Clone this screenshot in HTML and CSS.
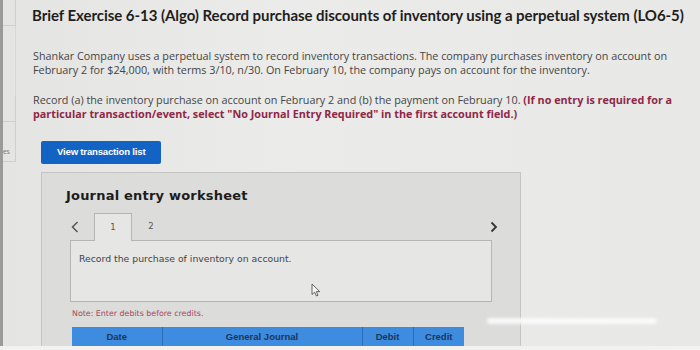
FILE: index.html
```html
<!DOCTYPE html>
<html>
<head>
<meta charset="utf-8">
<link rel="stylesheet" href="styles.css">
</head>
<body>
<div class="frame">
  <aside class="side">
    <div class="side-box sb1"></div>
    <div class="side-gap"></div>
    <div class="side-box sb2"></div>
    <div class="side-box sb3"><span>es</span></div>
  </aside>
  <main class="main">
    <h1 class="title">Brief Exercise 6-13 (Algo) Record purchase discounts of inventory using a perpetual system (LO6-5)</h1>
    <p class="para p1">Shankar Company uses a perpetual system to record inventory transactions. The company purchases inventory on account on<br>February 2 for $24,000, with terms 3/10, n/30. On February 10, the company pays on account for the inventory.</p>
    <p class="para p2">Record (a) the inventory purchase on account on February 2 and (b) the payment on February 10. <strong class="req">(If no entry is required for a<br>particular transaction/event, select "No Journal Entry Required" in the first account field.)</strong></p>
    <button class="btn">View transaction list</button>
    <section class="ws">
      <h2 class="ws-title">Journal entry worksheet</h2>
      <div class="tabs">
        <svg class="nav prev" width="8" height="12" viewBox="0 0 8 12"><path d="M6.5 1 L1.5 6 L6.5 11" fill="none" stroke="#555" stroke-width="1.5"/></svg>
        <div class="tab active">1</div>
        <div class="tab">2</div>
        <div class="spacer"></div>
        <svg class="nav next" width="8" height="12" viewBox="0 0 8 12"><path d="M1.5 1.5 L6 6 L1.5 10.5" fill="none" stroke="#333" stroke-width="1.8"/></svg>
      </div>
      <div class="content">
        <p class="content-text">Record the purchase of inventory on account.</p>
        <svg class="cursor" width="10" height="14" viewBox="0 0 10 14"><path d="M1 1 L1 11.5 L3.6 9.2 L5.4 13 L7 12.3 L5.3 8.6 L8.8 8.6 Z" fill="#f4f4f4" stroke="#555" stroke-width="0.9" stroke-linejoin="round"/></svg>
      </div>
      <p class="note">Note: Enter debits before credits.</p>
      <table class="jt">
        <thead>
          <tr>
            <th class="c-date">Date</th>
            <th class="c-gj">General Journal</th>
            <th class="c-dr">Debit</th>
            <th class="c-cr">Credit</th>
          </tr>
        </thead>
      </table>
    </section>
    <div class="glare"></div>
  </main>
</div>
<div class="bottom-strip"></div>
</body>
</html>
```

FILE: styles.css
```css
* { box-sizing: border-box; }
html, body { margin: 0; padding: 0; }
body {
  width: 700px;
  height: 350px;
  overflow: hidden;
  background: #e9e9e7;
  font-family: "Lato", "Liberation Sans", sans-serif;
}
.frame {
  display: flex;
  height: 346px;
  overflow: hidden;
  background: linear-gradient(90deg, #e4e4e2 0%, #ebebe9 40%, #e8e8e6 100%);
}
.side {
  width: 16px;
  flex: none;
  border-left: 3px solid #9a9a98;
  display: flex;
  flex-direction: column;
}
.side-box {
  border-right: 1px solid #cfcfcd;
  border-bottom: 1px solid #cfcfcd;
}
.sb1 { height: 26px; }
.side-gap { height: 70px; border-right: 1px solid #d6d6d4; }
.sb2 { height: 26px; }
.sb3 {
  height: 40px;
  font-size: 7px;
  color: #777;
  padding-top: 25px;
}
.main {
  flex: 1;
  position: relative;
  padding-left: 16px;
  padding-top: 5px;
}
.title {
  margin: 0;
  font-size: 15px;
  line-height: 20px;
  font-weight: 700;
  color: #1e1e1e;
  white-space: nowrap;
  letter-spacing: -0.05px;
}
.para {
  margin: 0;
  font-family: "Open Sans", "Lato", sans-serif;
  font-size: 10.8px;
  line-height: 13.5px;
  color: #454545;
  white-space: nowrap;
  padding-left: 1px;
}
.p1 { margin-top: 24px; }
.p2 { margin-top: 17px; }
.req { color: #8e2848; font-weight: 700; }
.btn {
  display: block;
  margin: 21px 0 0 9px;
  width: 120px;
  height: 23px;
  border: none;
  border-radius: 2px;
  background: #1363c4;
  color: #fff;
  font-family: "Liberation Sans", Arial, sans-serif;
  font-weight: 700;
  font-size: 9.6px;
  letter-spacing: -0.2px;
  text-align: left;
  padding: 0 0 2px 16px;
}
.ws {
  margin: 8px 0 0 9px;
  width: 480px;
  height: 200px;
  background: #dcdcda;
  border: 1px solid #c4c4c2;
  border-bottom: none;
  padding: 14px 28px 0 28px;
}
.ws-title {
  margin: 0 0 0 -4px;
  font-family: "DejaVu Sans", Verdana, sans-serif;
  font-size: 13px;
  line-height: 18px;
  font-weight: 700;
  color: #1d1d1d;
  letter-spacing: 0.2px;
}
.tabs {
  display: flex;
  align-items: stretch;
  margin-top: 8px;
  height: 27px;
  position: relative;
  z-index: 1;
}
.nav { align-self: center; }
.prev { margin: 0 15px 0 1px; }
.tab {
  width: 38px;
  display: flex;
  align-items: center;
  justify-content: center;
  font-family: "DejaVu Sans", Verdana, sans-serif;
  font-size: 8.5px;
  color: #555;
  padding-bottom: 2px;
}
.tab.active {
  background: #e6e6e4;
  border: 1px solid #b5b5b3;
  border-bottom: none;
  margin-bottom: -1px;
}
.spacer { flex: 1; }
.next { margin-right: -6px; }
.content {
  position: relative;
  height: 62px;
  background: #e6e6e4;
  border: 1px solid #b5b5b3;
  padding: 12px 0 0 8px;
}
.content-text {
  margin: 0;
  font-family: "DejaVu Sans", Verdana, sans-serif;
  font-size: 9.3px;
  line-height: 12px;
  color: #444;
}
.cursor {
  position: absolute;
  left: 240px;
  top: 42px;
}
.note {
  margin: 6px 0 0 2px;
  font-family: "DejaVu Sans", Verdana, sans-serif;
  font-size: 7.9px;
  line-height: 12px;
  color: #a24a5e;
}
.jt {
  margin: 7px 0 0 2px;
  border-collapse: collapse;
  width: 392px;
}
.jt th {
  height: 20px;
  padding: 0 0 2px 0;
  background: #3d8ce0;
  font-family: "Liberation Sans", Arial, sans-serif;
  font-size: 9.5px;
  font-weight: 700;
  color: #1c3658;
  border-right: 1px solid #2a6cb5;
}
.jt th:last-child { border-right: none; }
.c-date { width: 90px; }
.c-gj { width: 200px; }
.c-dr { width: 51px; }
.c-cr { width: 51px; }
.glare {
  position: absolute;
  left: 471px;
  top: 318px;
  width: 170px;
  height: 6px;
  background: #fbfbfb;
  border-radius: 3px;
  filter: blur(1.5px);
  opacity: 0.9;
}
.bottom-strip {
  height: 4px;
  background: #f2f2f0;
}
```
